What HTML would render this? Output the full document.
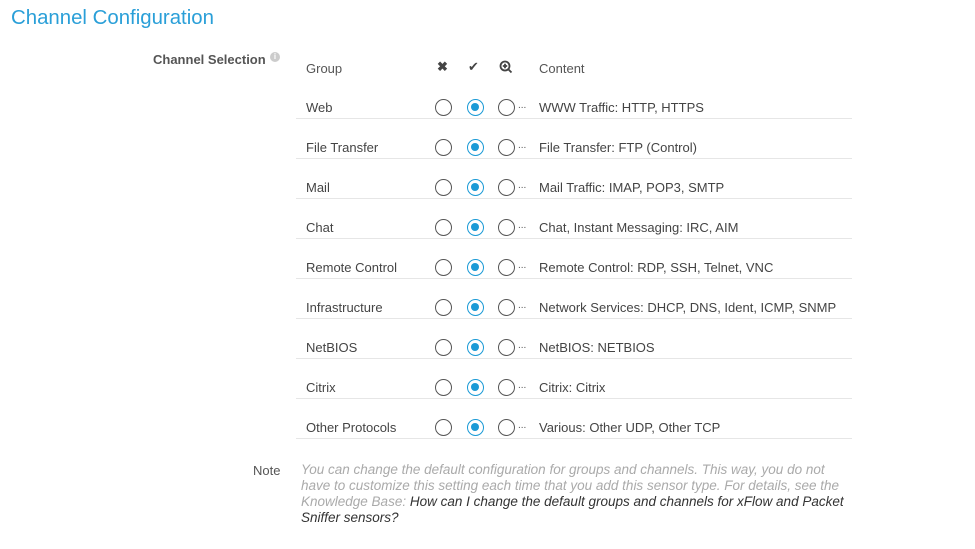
<!DOCTYPE html>
<html><head><meta charset="utf-8"><style>
body{margin:0;width:975px;height:549px;background:#fff;font-family:"Liberation Sans",sans-serif;position:relative;overflow:hidden}
.a{position:absolute;white-space:nowrap}
h1{position:absolute;left:11px;top:7px;margin:0;font-weight:normal;font-size:20.4px;color:#2a9fd8}
.t{font-size:13px;color:#444}
.r{position:absolute;width:17px;height:17px;border:1.6px solid #555;border-radius:50%;box-sizing:border-box}
.s{border-color:#1a9ad6}
.s::after{content:"";position:absolute;left:2.8px;top:2.8px;width:8.2px;height:8.2px;border-radius:50%;background:#1a9ad6}
.line{position:absolute;left:296px;width:556px;height:1px;background:#e6e6e6}
.note{position:absolute;left:301px;top:462px;white-space:nowrap;font-size:13.5px;line-height:16px;font-style:italic;color:#aaa}
</style></head><body>
<h1>Channel Configuration</h1>
<div class="a" style="left:153px;top:52px;font-size:13px;font-weight:bold;color:#555">Channel Selection</div>
<div class="a" style="left:270px;top:52px;width:10px;height:10px;border-radius:50%;background:#ccc;color:#fff;font-size:8px;text-align:center;line-height:10px;font-weight:bold">i</div>
<div class="a t" style="left:306px;top:61px;color:#555">Group</div>
<div class="a" style="left:437px;top:59px;font-size:13px;font-weight:bold;color:#444">✖</div>
<div class="a" style="left:468px;top:59px;font-size:13px;color:#444">✔</div>
<svg class="a" style="left:499px;top:60px" width="14" height="14" viewBox="0 0 14 14"><circle cx="6" cy="6" r="4.5" fill="none" stroke="#444" stroke-width="1.8"/><path d="M9.3 9.3L12.5 12.5M6 3.8v4.4M3.8 6h4.4" stroke="#444" stroke-width="1.8"/></svg>
<div class="a t" style="left:539px;top:61px;color:#555">Content</div>
<div id="rows"></div>
<div class="a" style="left:253px;top:463px;font-size:13px;color:#555">Note</div>
<div class="note">You can change the default configuration for groups and channels. This way, you do not<br>have to customize this setting each time that you add this sensor type. For details, see the<br>Knowledge Base: <span style="color:#333">How can I change the default groups and channels for xFlow and Packet<br>Sniffer sensors?</span></div>
<script>
var d=[["Web","WWW Traffic: HTTP, HTTPS"],["File Transfer","File Transfer: FTP (Control)"],["Mail","Mail Traffic: IMAP, POP3, SMTP"],["Chat","Chat, Instant Messaging: IRC, AIM"],["Remote Control","Remote Control: RDP, SSH, Telnet, VNC"],["Infrastructure","Network Services: DHCP, DNS, Ident, ICMP, SNMP"],["NetBIOS","NetBIOS: NETBIOS"],["Citrix","Citrix: Citrix"],["Other Protocols","Various: Other UDP, Other TCP"]];
var h="";d.forEach(function(r,i){var y=107+i*40;
h+='<div class="a t" style="left:306px;top:'+(y-7)+'px">'+r[0]+'</div>';
h+='<div class="r" style="left:435px;top:'+(y-8)+'px"></div><div class="r s" style="left:467px;top:'+(y-8)+'px"></div><div class="r" style="left:498px;top:'+(y-8)+'px"></div>';
h+='<div class="a" style="left:518px;top:'+(y-7)+'px;font-size:10px;color:#555">...</div>';
h+='<div class="a t" style="left:539px;top:'+(y-7)+'px">'+r[1]+'</div>';
h+='<div class="line" style="top:'+(y+11)+'px"></div>';});
document.getElementById("rows").innerHTML=h;
</script>
</body></html>
